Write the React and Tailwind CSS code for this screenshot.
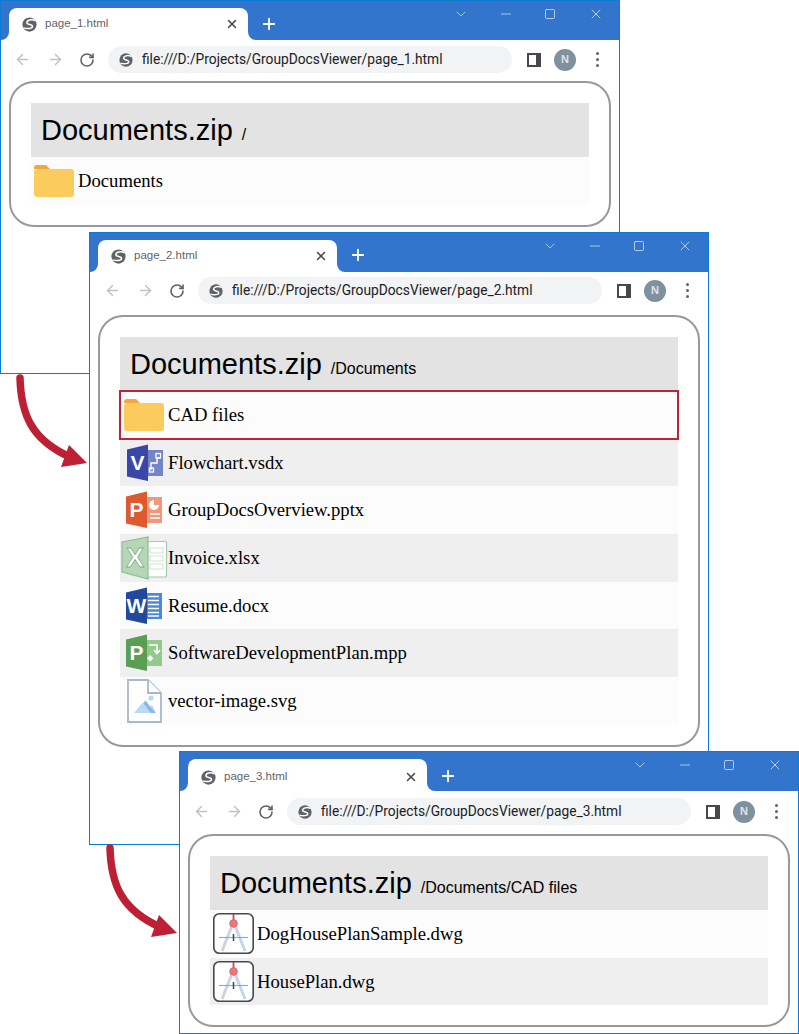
import { ArrowLeft, ArrowRight, RotateCw, Plus, X, Minus, ChevronDown, Square } from 'lucide-react';

const sansFont = "font-['Liberation_Sans',Arial,sans-serif]";

function Globe({ className }) {
  return (
    <svg viewBox="0 0 16 16" className={className}>
      <circle cx="8" cy="8" r="7.6" fill="#5f6368" />
      <path d="M14.5 4C10 1.8 5.2 3.4 5.2 6.1c0 2.4 6 1.4 6 3.9 0 2.2-5 3-9.6 1.6" fill="none" stroke="#fff" strokeWidth="1.6" />
    </svg>
  );
}

function Folder() {
  return (
    <svg viewBox="0 0 47 48" className="w-[47px] h-12 shrink-0">
      <path d="M3 11a3 3 0 0 1 3-3h9l4 4H3z" fill="#f5a73f" />
      <rect x="3" y="12" width="40" height="28" rx="3" fill="#fbcb5d" />
    </svg>
  );
}

function SplitIcon({ dark, light, letter, children, x = 6 }) {
  return (
    <svg viewBox="0 0 47 48" className="w-[47px] h-12 shrink-0">
      <rect x={x + 20} y="11" width="16" height="26" fill={light} />
      {children}
      <path d={`M${x} 10.5 L${x + 21} 5.5 V42 L${x} 37.5z`} fill={dark} />
      <text x={x + 10.5} y="31" textAnchor="middle" fontFamily="Liberation Sans" fontWeight="700" fontSize="21" fill="#fff">{letter}</text>
    </svg>
  );
}

function VisioIcon() {
  return (
    <SplitIcon dark="#3a47a6" light="#7484c9" letter="V">
      <path d="M30 31v-7h6v-5h3" stroke="#fff" strokeWidth="1.4" fill="none" />
      <rect x="35" y="14.5" width="4.5" height="4.5" fill="none" stroke="#fff" strokeWidth="1.3" />
      <rect x="28.5" y="29" width="4" height="4" fill="none" stroke="#fff" strokeWidth="1.3" />
    </SplitIcon>
  );
}

function PptIcon() {
  return (
    <SplitIcon dark="#dc5a2e" light="#f1987a" letter="P" x={5}>
      <path d="M33 14a5 5 0 1 0 5 5h-5z" fill="#fff" />
      <path d="M29 28h10M29 32h10" stroke="#fff" strokeWidth="1.5" />
    </SplitIcon>
  );
}

function ExcelIcon() {
  return (
    <svg viewBox="0 0 47 48" className="w-[47px] h-12 shrink-0">
      <rect x="24" y="7.5" width="21.5" height="35.5" rx="1" fill="#fff" stroke="#a5cca8" strokeWidth="1.2" />
      <path d="M29 14h13v5H29zM29 22h13v5H29zM29 30h13v5H29z" fill="none" stroke="#d3e4d4" strokeWidth="1.2" />
      <path d="M1 8 L27 3 V45 L1 38z" fill="#b6d7b7" stroke="#8fbd93" strokeWidth="1.2" />
      <text x="14" y="33" textAnchor="middle" fontFamily="Liberation Sans" fontWeight="700" fontSize="27" fill="#fff" stroke="#7fb083" strokeWidth="0.8">X</text>
    </svg>
  );
}

function WordIcon() {
  return (
    <SplitIcon dark="#23499f" light="#4a87e0" letter="W" x={5}>
      <path d="M27 14.5h11M27 18.5h11M27 22.5h11M27 26.5h11M27 30.5h11M27 34h11" stroke="#fff" strokeWidth="1.5" />
    </SplitIcon>
  );
}

function ProjectIcon() {
  return (
    <SplitIcon dark="#5a9e53" light="#94c98d" letter="P" x={5}>
      <path d="M28 16h8v8M33 21l3 3.5 3-3.5" stroke="#fff" strokeWidth="1.6" fill="none" />
      <rect x="27" y="27" width="4.5" height="4.5" fill="#fff" transform="rotate(45 29.2 29.2)" />
    </SplitIcon>
  );
}

function SvgFileIcon() {
  return (
    <svg viewBox="0 0 47 48" className="w-[47px] h-12 shrink-0">
      <path d="M7 3h20l13 13v29H7z" fill="#fff" stroke="#a9b7cb" strokeWidth="1.8" />
      <path d="M27 3v13h13" fill="#fff" stroke="#a9b7cb" strokeWidth="1.8" />
      <circle cx="30" cy="21" r="2.6" fill="#b3d9f7" />
      <path d="M13 36l8-10 6 6 4-4 4 8z" fill="#b5dbf8" />
      <path d="M24.5 23.5l10 12.5h-4.5l-8-9.5z" fill="#8fb7e0" />
    </svg>
  );
}

function DwgIcon() {
  return (
    <svg viewBox="0 0 47 48" className="w-[47px] h-12 shrink-0">
      <rect x="3.8" y="3.8" width="39.4" height="39.4" rx="5.5" fill="#fff" stroke="#484848" strokeWidth="1.6" />
      <path d="M23.5 4v7" stroke="#c9484f" strokeWidth="1.8" />
      <path d="M21.5 17 12 41M25.5 17 35 41" stroke="#c6d6e6" strokeWidth="3" />
      <circle cx="23.5" cy="13.5" r="3.8" fill="#e5797d" stroke="#d8656a" />
      <path d="M9 27.5h29" stroke="#9aa6b0" strokeWidth="1.1" />
      <path d="M23.5 24v7" stroke="#3c4650" strokeWidth="1.5" />
    </svg>
  );
}

function Row({ icon, name, alt, selected, inset }) {
  return (
    <div className={`flex items-center h-[47.7px] text-[18.67px] text-black font-['Liberation_Serif','Times_New_Roman',serif] ${inset ? 'pl-px' : ''} ${alt ? 'bg-[#efefef]' : 'bg-[#fcfcfc]'} ${selected ? 'outline-2 -outline-offset-1 outline-[#bd2438] relative' : ''}`}>
      {icon}
      <span>{name}</span>
    </div>
  );
}

function Flare({ side }) {
  return side === 'left' ? (
    <svg viewBox="0 0 8 8" className="absolute -left-2 bottom-0 w-2 h-2">
      <path d="M8 0v8H0a8 8 0 0 0 8-8z" fill="#fff" />
    </svg>
  ) : (
    <svg viewBox="0 0 8 8" className="absolute -right-2 bottom-0 w-2 h-2">
      <path d="M0 0v8h8a8 8 0 0 1-8-8z" fill="#fff" />
    </svg>
  );
}

function BrowserWindow({ className, title, path, crumb, tabPad, plusTop, toolbarPad, panelTop, rows }) {
  return (
    <div className={`absolute w-[620px] bg-white border border-[#0d7bd6] ${className}`}>
      <div className="flex h-[39px] bg-[#3375cd]">
        <div className={`relative flex items-center w-[239px] h-8 mt-[7px] ml-[8px] pl-[12px] pr-[9px] bg-white rounded-t-lg ${tabPad} ${sansFont}`}>
          <Flare side="left" />
          <Flare side="right" />
          <Globe className="w-[15px] h-[15px] ml-px" />
          <span className="ml-[8px] text-[11.5px] text-[#5f6368]">{title}</span>
          <X className="w-[14px] h-[14px] ml-auto text-[#45494d]" strokeWidth={2.6} />
        </div>
        <Plus className={`w-[18px] h-[18px] ml-[12px] text-white ${plusTop}`} strokeWidth={2.4} />
        <div className="flex ml-auto text-[#e8eefa]">
          <ChevronDown className="w-[16px] h-[16px] mr-[29px] mt-[5px]" strokeWidth={1} />
          <Minus className="w-[16px] h-[16px] mr-[30px] mt-[5px]" strokeWidth={1} />
          <Square className="w-[12px] h-[12px] mr-[32px] mt-[7px]" strokeWidth={1.4} />
          <X className="w-[16px] h-[16px] mr-[15px] mt-[5px]" strokeWidth={1.1} />
        </div>
      </div>
      <div className={`flex items-center h-[35px] ${toolbarPad} ${sansFont}`}>
        <ArrowLeft className="w-[17px] h-[17px] text-[#bfc1c4]" strokeWidth={2} />
        <ArrowRight className="w-[17px] h-[17px] ml-[16px] text-[#bfc1c4]" strokeWidth={2} />
        <RotateCw className="w-[16px] h-[16px] ml-[15px] text-[#5f6368]" strokeWidth={2.4} />
        <div className="flex items-center w-[404px] h-[27px] ml-[13px] pl-[11px] rounded-full bg-[#f1f3f4]">
          <Globe className="w-[14px] h-[14px]" />
          <span className="ml-[9px] text-[13.75px] text-[#202124] font-['Roboto',sans-serif]">file:///D:/Projects/GroupDocsViewer/{path}</span>
        </div>
        <svg viewBox="0 0 14 14" className="w-[14px] h-[14px] ml-[15px]">
          <rect x="1" y="1" width="12" height="12" fill="#fff" stroke="#45494d" strokeWidth="2" />
          <rect x="9" y="1" width="4" height="12" fill="#45494d" />
        </svg>
        <div className="flex items-center justify-center w-[22px] h-[22px] ml-[13px] rounded-full bg-[#7f919f] text-[#dfe4e8] text-[11px] font-bold">N</div>
        <div className="flex flex-col gap-[3px] ml-[20px]">
          <span className="w-[3px] h-[3px] rounded-full bg-[#5f6368]" />
          <span className="w-[3px] h-[3px] rounded-full bg-[#5f6368]" />
          <span className="w-[3px] h-[3px] rounded-full bg-[#5f6368]" />
        </div>
      </div>
      <div className={`ml-[8px] px-[20px] pt-[20px] pb-[20px] w-[602px] border-2 border-[#999999] rounded-[25px] bg-white ${panelTop}`}>
        <div className={`flex items-baseline h-[54px] pl-[10px] pt-[9px] bg-[#e3e3e3] text-black ${sansFont}`}>
          <span className="text-[29px] leading-[36px]">Documents.zip</span>
          <span className="ml-[9px] text-[16px]">{crumb}</span>
        </div>
        {rows}
      </div>
    </div>
  );
}

function CurvedArrow({ className }) {
  return (
    <svg viewBox="0 0 90 100" className={`absolute w-[90px] h-[100px] ${className}`}>
      <path d="M20 8C21 45 32 70 70 87" fill="none" stroke="#bd2035" strokeWidth="7.5" strokeLinecap="round" />
      <path d="M87 93 61 97 69 75z" fill="#bd2035" />
    </svg>
  );
}

export default function App() {
  return (
    <div className="relative w-[799px] h-[1034px] overflow-hidden bg-white">
      <BrowserWindow
        className="left-0 top-0 h-[374px]"
        title="page_1.html"
        path="page_1.html"
        crumb="/"
        tabPad=""
        plusTop="mt-[14px]"
        toolbarPad="pl-[13px] pt-[4px]"
        panelTop="mt-[6px]"
        rows={<Row icon={<Folder />} name="Documents" />}
      />
      <CurvedArrow className="left-0 top-[370px]" />
      <BrowserWindow
        className="left-[89px] top-[232px] h-[613px]"
        title="page_2.html"
        path="page_2.html"
        crumb="/Documents"
        tabPad=""
        plusTop="mt-[13px]"
        toolbarPad="pl-[14px] pt-[2px]"
        panelTop="mt-[8px]"
        rows={
          <>
            <Row icon={<Folder />} name="CAD files" selected inset />
            <Row icon={<VisioIcon />} name="Flowchart.vsdx" alt inset />
            <Row icon={<PptIcon />} name="GroupDocsOverview.pptx" inset />
            <Row icon={<ExcelIcon />} name="Invoice.xlsx" alt inset />
            <Row icon={<WordIcon />} name="Resume.docx" inset />
            <Row icon={<ProjectIcon />} name="SoftwareDevelopmentPlan.mpp" alt inset />
            <Row icon={<SvgFileIcon />} name="vector-image.svg" inset />
          </>
        }
      />
      <CurvedArrow className="left-[90px] top-[840px]" />
      <BrowserWindow
        className="left-[179px] top-[751px] h-[283px]"
        title="page_3.html"
        path="page_3.html"
        crumb="/Documents/CAD files"
        tabPad="pt-[4px]"
        plusTop="mt-[15px]"
        toolbarPad="pl-[13px] pt-[6px]"
        panelTop="mt-[8px]"
        rows={
          <>
            <Row icon={<DwgIcon />} name="DogHousePlanSample.dwg" />
            <Row icon={<DwgIcon />} name="HousePlan.dwg" alt />
          </>
        }
      />
    </div>
  );
}
